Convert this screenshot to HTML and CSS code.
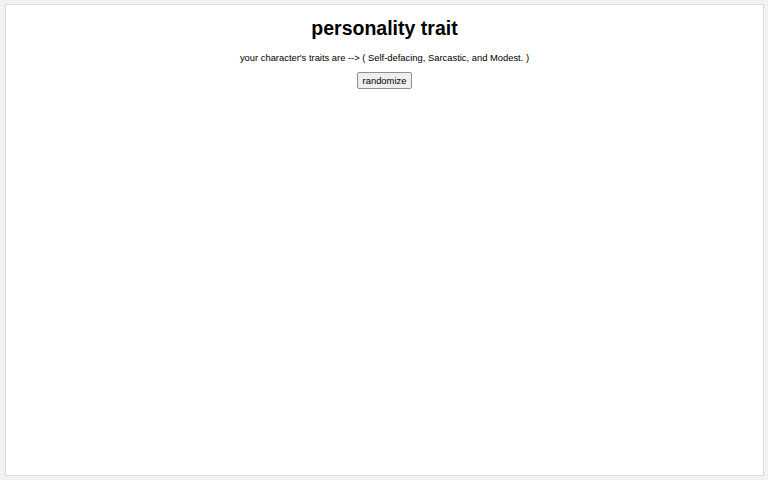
FILE: index.html
```html
<!DOCTYPE html>
<html lang="en">

<head>
    <meta charset="UTF-8">
    <meta name="viewport" content="width=device-width, initial-scale=1.0">
    <title>Personality Trait</title>
    <link rel="stylesheet" href="styles.css">
</head>

<body>
    <div class="panel">
        <h1>personality trait</h1>
        <p class="result">your character's traits are --&gt; ( <span id="traits">Self-defacing, Sarcastic, and Modest.</span> )</p>
        <button type="button" onclick="randomize()">randomize</button>
    </div>

    <script>
        var traits = ["Self-defacing", "Sarcastic", "Modest", "Brave", "Curious", "Stubborn", "Loyal", "Lazy", "Cheerful", "Grumpy"];

        function randomize() {
            var picked = [];
            while (picked.length < 3) {
                var t = traits[Math.floor(Math.random() * traits.length)];
                if (picked.indexOf(t) === -1) picked.push(t);
            }
            document.getElementById("traits").textContent = picked[0] + ", " + picked[1] + ", and " + picked[2] + ".";
        }
    </script>
</body>

</html>
```

FILE: styles.css
```css
body {
    font-family: 'Liberation Sans', Arial, sans-serif;
    background-color: #f2f2f2; /* light grey page */
    margin: 0;
    padding: 4px 4px 4px 5px;
    box-sizing: border-box;
    height: 100vh;
}

.panel {
    background-color: #fff;
    border: 1px solid #dcdcdc;
    height: 100%;
    box-sizing: border-box;
    text-align: center;
    padding-top: 12px;
}

h1 {
    font-size: 19.5px;
    margin: 0 0 12px;
}

.result {
    font-size: 9.4px;
    margin: 0 0 7px;
}

button {
    font-family: 'Liberation Sans', Arial, sans-serif;
    font-size: 9.4px;
    padding: 2px 5px;
    background-color: #efefef;
    border: 1px solid #8f8f8f;
    border-radius: 2px;
}
```
